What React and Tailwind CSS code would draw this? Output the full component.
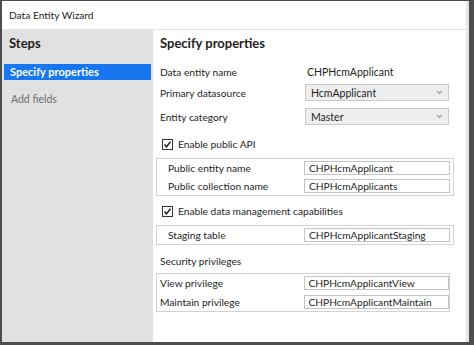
const font = { fontFamily: 'Lato, "Noto Sans", sans-serif' }

const Chevron = () => (
    <svg width="7" height="5" viewBox="0 0 7 5" className="shrink-0">
        <polyline points="1,1 3.5,3.5 6,1" fill="none" stroke="#9a9a9a" strokeWidth="1.2" />
    </svg>
)

const Check = () => (
    <div className="w-[11px] h-[11px] border border-[#333] bg-white flex items-center justify-center shrink-0">
        <svg width="9" height="9" viewBox="0 0 9 9">
            <polyline points="1.5,4.5 3.5,6.8 7.5,1.8" fill="none" stroke="#222" strokeWidth="1.5" />
        </svg>
    </div>
)

const Dropdown = ({ value }) => (
    <div className="w-[144px] h-[17px] border border-[#c9c9c9] bg-[#eeeeee] flex items-center justify-between pl-[5px] pr-[5px]">
        <span className="text-[10.5px]">{value}</span>
        <Chevron />
    </div>
)

const TextBox = ({ value }) => (
    <div className="w-[146px] h-[14px] border border-[#c4c4c4] bg-white flex items-center pl-[4px] whitespace-nowrap overflow-hidden">
        {value}
    </div>
)

const App = () => {
    return (
        <div style={font} className="w-[474px] h-[345px] bg-[#4d4d4d] pt-px pl-[2px] pr-[5px] pb-[3px] text-[10.2px] leading-[14px] text-[#1e1e1e]">
            <div className="h-full flex flex-col bg-white border-r-[3px] border-[#e6e6e6]">
                <div className="h-[29px] shrink-0 border-b border-[#e3e3e3] flex items-center pl-[7px]">
                    Data Entity Wizard
                </div>
                <div className="flex flex-1">
                    {/* steps */}
                    <div className="w-[151px] shrink-0 bg-[#e1e1e1] flex flex-col">
                        <div className="mt-[5px] h-[16px] pl-[7px] flex items-center text-[13px] font-bold">Steps</div>
                        <div className="mt-[13px] mx-[2px] h-[16px] bg-[#1877f0] text-white font-bold flex items-center pl-[6px] text-[11px]">
                            Specify properties
                        </div>
                        <div className="mt-[11px] h-[16px] pl-[9px] flex items-center text-[10.5px] text-[#6e6e6e]">Add fields</div>
                    </div>

                    {/* properties */}
                    <div className="flex-1 pl-[3px] flex flex-col">
                        <div className="mt-[5px] h-[16px] pl-[4px] flex items-center text-[13px] font-bold">Specify properties</div>

                        <div className="mt-[13px] h-[16px] flex items-center">
                            <div className="w-[151px] pl-[4px]">Data entity name</div>
                            <div className="text-[10.5px]">CHPHcmApplicant</div>
                        </div>
                        <div className="mt-[4px] flex items-center">
                            <div className="w-[149px] pl-[4px]">Primary datasource</div>
                            <Dropdown value="HcmApplicant" />
                        </div>
                        <div className="mt-[7px] flex items-center">
                            <div className="w-[149px] pl-[4px]">Entity category</div>
                            <Dropdown value="Master" />
                        </div>

                        <div className="mt-[12px] h-[14px] flex items-center pl-[6px] gap-[5px]">
                            <Check />
                            <span>Enable public API</span>
                        </div>

                        <div className="mt-[7px] w-[298px] border border-[#d2d2d2] py-[2px] flex flex-col gap-[4px]">
                            <div className="flex items-center">
                                <div className="w-[147px] pl-[11px]">Public entity name</div>
                                <TextBox value="CHPHcmApplicant" />
                            </div>
                            <div className="flex items-center">
                                <div className="w-[147px] pl-[11px]">Public collection name</div>
                                <TextBox value="CHPHcmApplicants" />
                            </div>
                        </div>

                        <div className="mt-[8px] h-[14px] flex items-center pl-[6px] gap-[5px]">
                            <Check />
                            <span>Enable data management capabilities</span>
                        </div>

                        <div className="mt-[7px] w-[298px] border border-[#d2d2d2] py-[2px] flex flex-col">
                            <div className="flex items-center">
                                <div className="w-[147px] pl-[11px]">Staging table</div>
                                <TextBox value="CHPHcmApplicantStaging" />
                            </div>
                        </div>

                        <div className="mt-[8px] h-[16px] pl-[4px] flex items-center">Security privileges</div>

                        <div className="mt-[4px] w-[294px] border border-[#d2d2d2] py-[2px] flex flex-col gap-[5px]">
                            <div className="flex items-center">
                                <div className="w-[147px] pl-[3px]">View privilege</div>
                                <TextBox value="CHPHcmApplicantView" />
                            </div>
                            <div className="flex items-center">
                                <div className="w-[147px] pl-[3px]">Maintain privilege</div>
                                <TextBox value="CHPHcmApplicantMaintain" />
                            </div>
                        </div>
                    </div>
                </div>
            </div>
        </div>
    )
}

export default App
